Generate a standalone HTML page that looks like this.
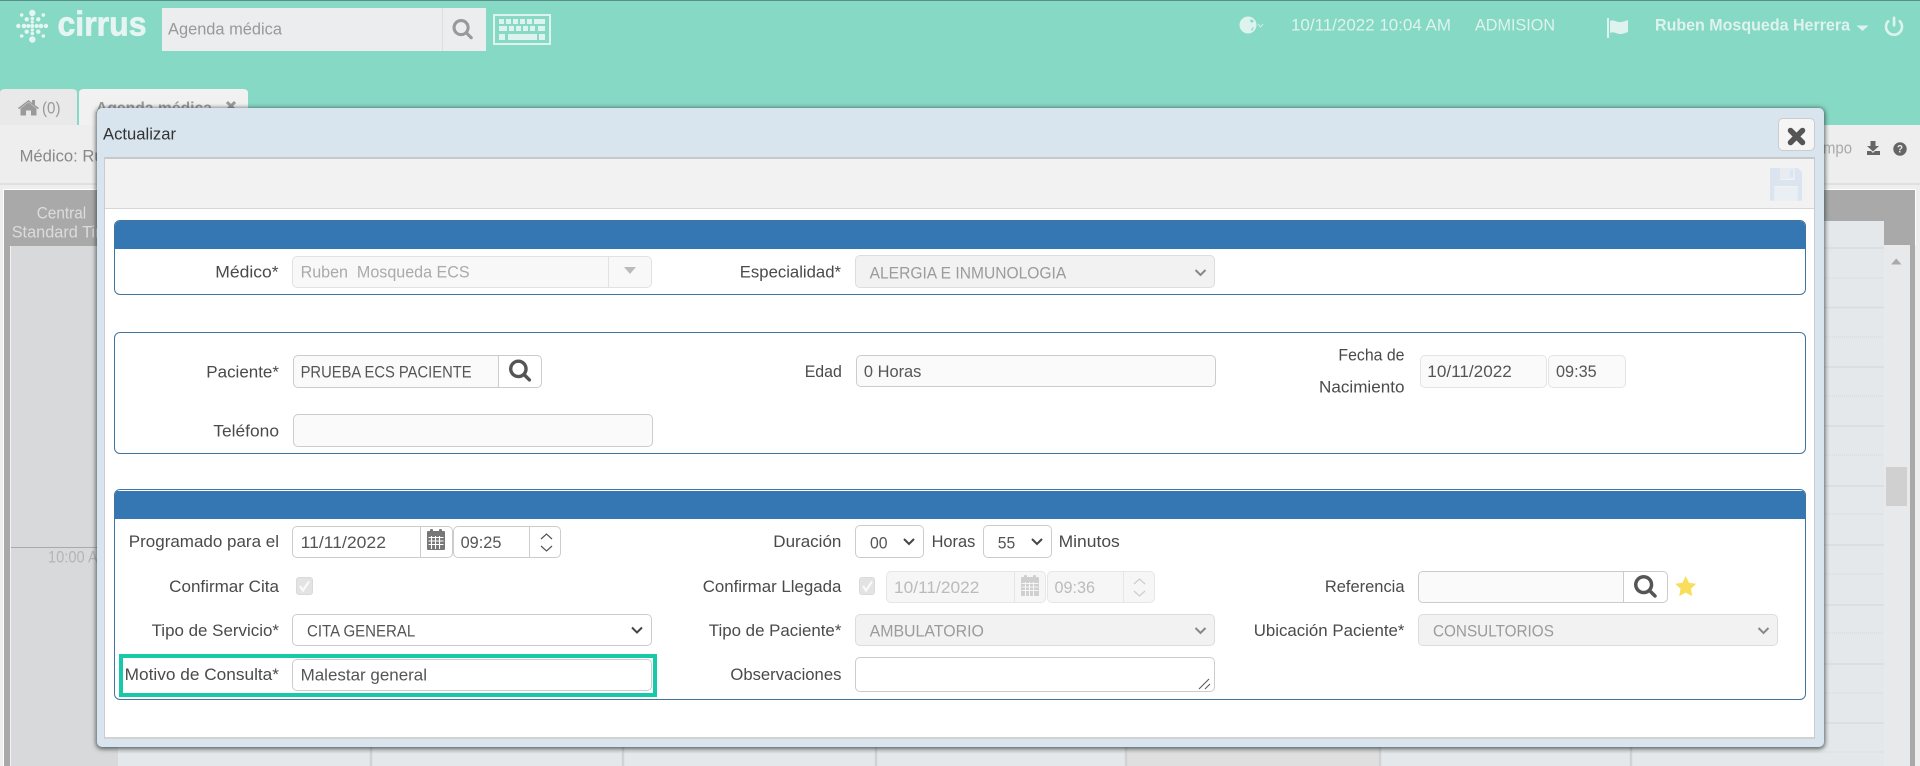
<!DOCTYPE html>
<html lang="es"><head><meta charset="utf-8"><title>Agenda médica</title>
<style>
html,body{margin:0;padding:0;width:1920px;height:766px;overflow:hidden;background:#e4e8ea;font-family:"Liberation Sans",sans-serif}
svg{position:absolute;left:0;top:0;display:block}
svg text{font-family:"Liberation Sans",sans-serif;font-size:17px;transform:translateY(-.5px)}
.a{position:absolute;box-sizing:border-box}
.f{position:absolute;box-sizing:border-box;border:1px solid #ccc;border-radius:5px;background:#fff}
.ro{background:#fafafa}
.dis{background:#f2f2f2;border-color:#ddd}
.lt{border-color:#e4e4e4}
.sec{position:absolute;box-sizing:border-box;left:114px;width:1692px;border:1px solid #41759f;border-radius:6px;background:#fff;overflow:hidden}
.hd{height:29px;background:#3477b2;margin:-1px -1px 0}
.l{fill:#4a4a4a}
.v{fill:#555}
.d{fill:#9b9b9b}
.w{fill:#dff3ee}
</style></head><body>

<svg width="1920" height="766" viewBox="0 0 1920 766">
<defs>
<path id="mag" d="M1152 704q0-185-131.500-316.500t-316.500-131.500-316.500 131.500-131.500 316.500 131.500 316.500 316.500 131.500 316.500-131.500 131.500-316.500zm512 832q0 52-38 90t-90 38q-54 0-90-38l-343-342q-179 124-399 124-143 0-273.500-55.500t-225-150-150-225-55.500-273.500 55.500-273.500 150-225 225-150 273.500-55.500 273.500 55.500 225 150 150 225 55.500 273.500q0 220-124 399l343 343q37 37 37 90z"/>
</defs>
<rect width="1920" height="125" fill="#86d9c5"/>
<rect width="1920" height="1" fill="#5c8f88"/>
<g fill="#e6f5f1">
<circle cx="18.300" cy="26" r="2.200"/><circle cx="24" cy="26" r="2.300"/><circle cx="28.300" cy="26" r="2"/><circle cx="32.300" cy="26" r="2"/><circle cx="36.700" cy="26" r="2"/><circle cx="41" cy="26" r="2.300"/><circle cx="46" cy="26" r="2.200"/>
<circle cx="32.300" cy="13" r="3.200"/><circle cx="32.300" cy="18.500" r="1.800"/><circle cx="32.300" cy="22" r="1.600"/><circle cx="32.300" cy="30" r="1.600"/><circle cx="32.300" cy="33.500" r="1.800"/><circle cx="32.300" cy="39.500" r="3.200"/>
<circle cx="21.700" cy="15" r="1.800"/><circle cx="26.700" cy="19.300" r="2.200"/><circle cx="38.300" cy="19.300" r="2.200"/><circle cx="43.300" cy="15" r="1.800"/><circle cx="21.700" cy="36" r="1.800"/><circle cx="26.700" cy="31.700" r="2.200"/><circle cx="38.300" cy="31.700" r="2.200"/><circle cx="43.300" cy="36" r="1.800"/>
</g>
<text x="57.500" y="36" textLength="89" lengthAdjust="spacingAndGlyphs" fill="#e6f5f1" stroke="#e6f5f1" stroke-width="0.700" style="font-size:34px;font-weight:bold">cirrus</text>
<rect x="162" y="8" width="324" height="43" fill="#ecedef"/>
<rect x="442" y="8" width="1" height="43" fill="#dcdddf"/>
<text x="168" y="35" textLength="114" lengthAdjust="spacingAndGlyphs" fill="#999">Agenda médica</text>
<use href="#mag" transform="translate(452.500,19) scale(0.0122)" fill="#999"/>
<g fill="none" stroke="#dff3ee" stroke-width="2"><rect x="494" y="15" width="56" height="29"/></g>
<g fill="#dff3ee">
<rect x="499" y="19" width="5" height="5"/><rect x="506" y="19" width="5" height="5"/><rect x="513" y="19" width="5" height="5"/><rect x="520" y="19" width="5" height="5"/><rect x="527" y="19" width="5" height="5"/><rect x="534" y="19" width="11" height="5"/>
<rect x="499" y="26" width="8" height="5"/><rect x="509" y="26" width="5" height="5"/><rect x="516" y="26" width="5" height="5"/><rect x="523" y="26" width="5" height="5"/><rect x="530" y="26" width="5" height="5"/><rect x="538" y="26" width="7" height="5"/>
<rect x="499" y="34" width="6" height="6"/><rect x="508" y="34" width="29" height="6"/><rect x="539" y="34" width="6" height="6"/>
</g>

<!-- globe -->
<circle cx="1248" cy="25" r="8.500" fill="#dff3ee"/>
<path d="M1251 19l3 2-2 2-2-2zM1252 28l2-1-2 4-1-1z" fill="#86d9c5"/>
<path d="M1258 24l2.500 3 2.500-3" fill="none" stroke="#cfeee6" stroke-width="1"/>
<text x="1291" y="31" textLength="160" lengthAdjust="spacingAndGlyphs" class="w">10/11/2022 10:04 AM</text>
<text x="1475" y="31" textLength="80" lengthAdjust="spacingAndGlyphs" class="w">ADMISION</text>
<!-- flag -->
<rect x="1607" y="18" width="2" height="20" fill="#dff3ee"/>
<path d="M1610 21c4-2 7 2 10 1c3 0 5-1 8-2v12c-3 1-5 2-8 2c-3 0-6-3-10-1z" fill="#dff3ee"/>
<text x="1655" y="31" textLength="195" lengthAdjust="spacingAndGlyphs" class="w" style="font-weight:bold">Ruben Mosqueda Herrera</text>
<path d="M1856.500 25.500h12l-6 5.500z" fill="#dff3ee"/>
<path d="M1889 20.500a8 8 0 1 0 10 0" fill="none" stroke="#dff3ee" stroke-width="2.600"/>
<rect x="1892.700" y="16.500" width="2.700" height="10" rx="1.300" fill="#dff3ee"/>

<!-- tabs -->
<path d="M0 125V93q0-4 5-4h67q5 0 5 4v32z" fill="#e9e9e9"/>
<path d="M79 125V93q0-4 5-4h159q5 0 5 4v32z" fill="#f1f1f1"/>
<path d="M18 108l10.500-8 3.500 2.700V100h3v5l4 3-1 1.200-9.500-7.500-9.500 7.500zM20.500 108.500l8-6.200 8 6.200v7h-5.500v-5h-5v5h-5.500z" fill="#9a9a9a"/>
<text x="42" y="114" textLength="18.500" lengthAdjust="spacingAndGlyphs" fill="#999">(0)</text>
<text x="96" y="114" textLength="116" lengthAdjust="spacingAndGlyphs" fill="#999" style="font-weight:bold">Agenda médica</text>
<path d="M227 102l8 8M235 102l-8 8" stroke="#999" stroke-width="3" fill="none"/>

<!-- toolbar strip -->
<rect y="125" width="1920" height="60" fill="#eeeeee"/>
<rect y="183" width="1920" height="2" fill="#e0e0e0"/>
<text x="19.600" y="162" textLength="84" lengthAdjust="spacingAndGlyphs" fill="#888">Médico: Ru</text>
<text x="1823" y="154" textLength="29" lengthAdjust="spacingAndGlyphs" fill="#aaa">mpo</text>
<path d="M1870.500 141h5v5h3.500l-6 5.500-6-5.500h3.500z" fill="#666"/>
<path d="M1867 151h4l2 2 2-2h5v4h-13z" fill="#666"/>
<circle cx="1900" cy="149" r="6.700" fill="#666"/>
<text x="1897" y="153" textLength="6" lengthAdjust="spacingAndGlyphs" fill="#eee" style="font-size:11px;font-weight:bold">?</text>

<!-- calendar bg -->
<rect x="0" y="185" width="1920" height="581" fill="#eeeeee"/>
<rect x="3" y="189" width="1913" height="577" fill="#fff"/>
<rect x="4" y="190" width="1911" height="576" fill="#a9a9a9"/>
<rect x="10" y="246" width="110" height="520" fill="#d8d9db"/>
<rect x="10" y="246" width="1" height="520" fill="#f2f2f2"/>
<rect x="11" y="547" width="100" height="1" fill="#aaa"/>
<text x="36.700" y="219" textLength="49.500" lengthAdjust="spacingAndGlyphs" fill="#dcdcdc">Central</text>
<text x="11.700" y="238" textLength="106" lengthAdjust="spacingAndGlyphs" fill="#dcdcdc">Standard Time</text>
<text x="48" y="563" textLength="62" lengthAdjust="spacingAndGlyphs" fill="#b5b5b5">10:00 AM</text>
<rect x="118" y="221" width="1766" height="24" fill="#e4e8ea"/>
<rect x="118" y="245" width="1766" height="521" fill="#e4e8ea"/>
<rect x="1126" y="245" width="254" height="521" fill="#dfdfdf"/>
<g stroke="#d9dcde" stroke-width="1.500">
<path d="M118 248H1884M118 307.500H1884M118 367H1884M118 426H1884M118 486H1884M118 545H1884M118 605H1884M118 664H1884M118 723H1884"/>
</g>
<g stroke="#d5d8da" stroke-width="1" stroke-dasharray="1 1">
<path d="M118 278H1884M118 337H1884M118 396H1884M118 455H1884M118 514H1884M118 574H1884M118 633H1884M118 693H1884M118 752H1884"/>
</g>
<g stroke="#cfd3d5" stroke-width="2.500">
<path d="M371 245V766M623 245V766M876 245V766M1126 245V766M1380 245V766M1631 245V766"/>
</g>
<rect x="1884" y="245" width="26" height="521" fill="#e8e9ea"/>
<rect x="1886" y="467" width="21" height="39" fill="#d0d0d0"/>
<path d="M1891 264.500h10.500l-5.250-6z" fill="#aaa"/>
<rect x="1915" y="245" width="5" height="521" fill="#eeeeee"/>
</svg>

<!-- modal -->
<div class="a" style="left:97px;top:108px;width:1727px;height:639px;background:#d9e5ee;border-radius:5px;box-shadow:0 1px 5px 1px rgba(40,50,50,.75)"></div>
<div class="a" style="left:104px;top:157px;width:1711px;height:582px;background:#fff;border:1px solid #ccc;border-top:2px solid #c8c8c8;border-bottom:2px solid #d2d2d2"></div>
<div class="a" style="left:105px;top:159px;width:1709px;height:50px;background:#f2f2f2;border-bottom:1px solid #d6d6d6"></div>
<div class="a" style="left:1778px;top:118px;width:37px;height:33px;background:#f5f5f5;border:1px solid #ccc;border-radius:5px"></div>

<div class="sec" style="top:220px;height:75px"><div class="hd"></div></div>
<div class="sec" style="top:332px;height:122px"></div>
<div class="sec" style="top:489px;height:211px"><div class="hd" style="height:28px;margin-top:1px"></div></div>

<!-- section 1 fields -->
<div class="f dis" style="left:292px;top:256px;width:360px;height:32px;background:#f8f8f8;border-color:#e2e2e2"></div>
<div class="a" style="left:608px;top:257px;width:1px;height:30px;background:#e2e2e2"></div>
<div class="f dis" style="left:855px;top:255px;width:360px;height:33px"></div>
<!-- section 2 fields -->
<div class="f ro" style="left:293px;top:355px;width:249px;height:33px"></div>
<div class="a" style="left:498px;top:356px;height:31px;background:#fff;border-left:1px solid #ccc;border-radius:0 5px 5px 0;width:43px"></div>
<div class="f ro" style="left:293px;top:414px;width:360px;height:33px"></div>
<div class="f ro" style="left:856px;top:355px;width:360px;height:32px"></div>
<div class="f ro lt" style="left:1420px;top:355px;width:127px;height:33px"></div>
<div class="f ro lt" style="left:1548px;top:355px;width:78px;height:33px"></div>
<!-- section 3 fields -->
<div class="f" style="left:292px;top:526px;width:161px;height:32px"></div>
<div class="a" style="left:420px;top:527px;width:1px;height:30px;background:#ccc"></div>
<div class="f" style="left:453px;top:526px;width:108px;height:32px"></div>
<div class="a" style="left:529px;top:527px;width:1px;height:30px;background:#ccc"></div>
<div class="f" style="left:292px;top:614px;width:360px;height:32px"></div>
<div class="a" style="left:119px;top:654px;width:538px;height:43px;border:4.500px solid #17c9a9;background:#fff"></div>
<div class="f" style="left:292px;top:659px;width:360px;height:32px"></div>
<div class="f" style="left:855px;top:525px;width:69px;height:33px"></div>
<div class="f" style="left:983px;top:525px;width:69px;height:33px"></div>
<div class="f dis" style="left:886px;top:571px;width:160px;height:32px;background:#f6f6f6;border-color:#e6e6e6"></div>
<div class="a" style="left:1014px;top:572px;width:1px;height:30px;background:#e6e6e6"></div>
<div class="f dis" style="left:1047px;top:571px;width:108px;height:32px;background:#f6f6f6;border-color:#e6e6e6"></div>
<div class="a" style="left:1123px;top:572px;width:1px;height:30px;background:#e6e6e6"></div>
<div class="f dis" style="left:855px;top:614px;width:360px;height:32px"></div>
<div class="f" style="left:855px;top:657px;width:360px;height:35px"></div>
<div class="f ro" style="left:1418px;top:571px;width:250px;height:32px"></div>
<div class="a" style="left:1623px;top:572px;width:44px;height:30px;background:#fff;border-left:1px solid #ccc;border-radius:0 5px 5px 0"></div>
<div class="f dis" style="left:1418px;top:614px;width:360px;height:32px"></div>
<div class="a" style="left:296px;top:577px;width:17px;height:18px;background:#e3e3e3;border:1px solid #dadada;border-radius:3px"></div>
<div class="a" style="left:859px;top:577px;width:16px;height:18px;background:#e3e3e3;border:1px solid #dadada;border-radius:3px"></div>

<svg width="1920" height="766" viewBox="0 0 1920 766">
<!-- modal chrome -->
<text x="103" y="140" textLength="73" lengthAdjust="spacingAndGlyphs" fill="#333">Actualizar</text>
<path d="M1790.500 130.500l12 12M1802.500 130.500l-12 12" stroke="#555" stroke-width="5.500" stroke-linecap="round" fill="none"/>
<path d="M1770 168h10v12h15v-12h3l4 4v28.700h-4.500v-14.700h-23v14.700h-4.500z" fill="#dae5ef"/>
<rect x="1775" y="187" width="22" height="13.700" fill="#eaeff4"/>
<rect x="1780" y="168" width="15" height="11" fill="#e6ecf2"/>
<rect x="1790" y="170" width="3" height="7" fill="#dae5ef"/>

<!-- section 1 -->
<text x="215.300" y="278" textLength="63.300" lengthAdjust="spacingAndGlyphs" class="l">Médico*</text>
<text x="300.600" y="278" textLength="169" lengthAdjust="spacingAndGlyphs" fill="#aaa" xml:space="preserve">Ruben  Mosqueda ECS</text>
<path d="M624 267h12l-6 7z" fill="#bbb"/>
<text x="739.800" y="278" textLength="101.200" lengthAdjust="spacingAndGlyphs" class="l">Especialidad*</text>
<text x="869.600" y="279" textLength="196.700" lengthAdjust="spacingAndGlyphs" class="d">ALERGIA E INMUNOLOGIA</text>
<path d="M1195.500 270l5 5 5-5" fill="none" stroke="#888" stroke-width="2"/>

<!-- section 2 -->
<text x="206.300" y="378" textLength="72.700" lengthAdjust="spacingAndGlyphs" class="l">Paciente*</text>
<text x="300.600" y="378" textLength="171" lengthAdjust="spacingAndGlyphs" class="v">PRUEBA ECS PACIENTE</text>
<use href="#mag" transform="translate(509,359.500) scale(0.0133)" fill="#555"/>
<text x="213.300" y="437" textLength="65.700" lengthAdjust="spacingAndGlyphs" class="l">Teléfono</text>
<text x="804.700" y="377.500" textLength="37.100" lengthAdjust="spacingAndGlyphs" class="l">Edad</text>
<text x="863.900" y="377.500" textLength="57.500" lengthAdjust="spacingAndGlyphs" class="v">0 Horas</text>
<text x="1338.400" y="361" textLength="66.100" lengthAdjust="spacingAndGlyphs" class="l">Fecha de</text>
<text x="1319" y="393" textLength="85.500" lengthAdjust="spacingAndGlyphs" class="l">Nacimiento</text>
<text x="1427.300" y="377.500" textLength="84.500" lengthAdjust="spacingAndGlyphs" class="v">10/11/2022</text>
<text x="1556" y="377.500" textLength="40.700" lengthAdjust="spacingAndGlyphs" class="v">09:35</text>

<!-- section 3 -->
<text x="128.800" y="547.700" textLength="150.200" lengthAdjust="spacingAndGlyphs" class="l">Programado para el</text>
<text x="300.600" y="548.300" textLength="85.400" lengthAdjust="spacingAndGlyphs" class="v">11/11/2022</text>
<g fill="#777">
<path d="M428 531h16a1 1 0 0 1 1 1v17a1 1 0 0 1-1 1h-16a1 1 0 0 1-1-1v-17a1 1 0 0 1 1-1z"/>
<rect x="430" y="529" width="3" height="5" rx="1"/><rect x="439" y="529" width="3" height="5" rx="1"/>
</g>
<path d="M428.500 537.500h15M428.500 541h15M428.500 544.500h15M431.500 536v13M435.500 536v13M439.500 536v13" stroke="#fff" stroke-width="1.100" fill="none"/>
<text x="460.600" y="548.300" textLength="40.800" lengthAdjust="spacingAndGlyphs" class="v">09:25</text>
<path d="M541 539l5.500-5 5.500 5M541 546l5.500 5 5.500-5" fill="none" stroke="#555" stroke-width="1.200"/>

<text x="169.200" y="592.300" textLength="109.800" lengthAdjust="spacingAndGlyphs" class="l">Confirmar Cita</text>
<path d="M300 586l3 4.500 6-9" fill="none" stroke="#fafafa" stroke-width="2.200"/>
<text x="151.600" y="636.700" textLength="127.400" lengthAdjust="spacingAndGlyphs" class="l">Tipo de Servicio*</text>
<text x="307" y="637" textLength="108.300" lengthAdjust="spacingAndGlyphs" class="v">CITA GENERAL</text>
<path d="M632 627.500l5 5 5-5" fill="none" stroke="#444" stroke-width="2"/>
<text x="124.700" y="680.300" textLength="154.300" lengthAdjust="spacingAndGlyphs" class="l">Motivo de Consulta*</text>
<text x="300.600" y="681" textLength="126.400" lengthAdjust="spacingAndGlyphs" class="v">Malestar general</text>

<text x="773.300" y="547.700" textLength="68.100" lengthAdjust="spacingAndGlyphs" class="l">Duración</text>
<text x="870" y="549" textLength="17.600" lengthAdjust="spacingAndGlyphs" class="v">00</text>
<path d="M904 539l5 5 5-5" fill="none" stroke="#444" stroke-width="2"/>
<text x="931.600" y="547.700" textLength="43.700" lengthAdjust="spacingAndGlyphs" class="l">Horas</text>
<text x="997.800" y="549" textLength="17.500" lengthAdjust="spacingAndGlyphs" class="v">55</text>
<path d="M1032 539l5 5 5-5" fill="none" stroke="#444" stroke-width="2"/>
<text x="1058.600" y="547.700" textLength="61.200" lengthAdjust="spacingAndGlyphs" class="l">Minutos</text>

<text x="702.700" y="592.300" textLength="138.700" lengthAdjust="spacingAndGlyphs" class="l">Confirmar Llegada</text>
<path d="M863 586l3 4.500 6-9" fill="none" stroke="#fafafa" stroke-width="2.200"/>
<text x="894" y="593.300" textLength="85.400" lengthAdjust="spacingAndGlyphs" fill="#bbb">10/11/2022</text>
<g fill="#cfcfcf">
<path d="M1022 577h16a1 1 0 0 1 1 1v17a1 1 0 0 1-1 1h-16a1 1 0 0 1-1-1v-17a1 1 0 0 1 1-1z"/>
<rect x="1024" y="575" width="3" height="5" rx="1"/><rect x="1033" y="575" width="3" height="5" rx="1"/>
</g>
<path d="M1021.500 583.500h17M1021.500 587h17M1021.500 590.500h17M1025.500 582v14M1029.500 582v14M1033.500 582v14" stroke="#f6f6f6" stroke-width="1.100" fill="none"/>
<text x="1054.500" y="593.300" textLength="40.500" lengthAdjust="spacingAndGlyphs" fill="#bbb">09:36</text>
<path d="M1134 584l5.500-5 5.500 5M1134 591l5.500 5 5.500-5" fill="none" stroke="#ccc" stroke-width="1.200"/>

<text x="708.800" y="636.700" textLength="132.600" lengthAdjust="spacingAndGlyphs" class="l">Tipo de Paciente*</text>
<text x="869.600" y="637" textLength="114.300" lengthAdjust="spacingAndGlyphs" class="d">AMBULATORIO</text>
<path d="M1195.500 628l5 5 5-5" fill="none" stroke="#888" stroke-width="2"/>
<text x="730.400" y="680.300" textLength="111" lengthAdjust="spacingAndGlyphs" class="l">Observaciones</text>
<path d="M1199 689l10-10M1205 689l5-5" stroke="#555" stroke-width="1" fill="none"/>

<text x="1324.900" y="592.300" textLength="79.600" lengthAdjust="spacingAndGlyphs" class="l">Referencia</text>
<use href="#mag" transform="translate(1634,575) scale(0.0137)" fill="#555"/>
<path d="M1685.700 576l3.200 6.700 7.300 1-5.300 5.100 1.300 7.300-6.500-3.500-6.500 3.500 1.300-7.300-5.300-5.100 7.300-1z" fill="#f9de5c"/>
<text x="1253.700" y="636.700" textLength="150.800" lengthAdjust="spacingAndGlyphs" class="l">Ubicación Paciente*</text>
<text x="1433" y="637" textLength="120.900" lengthAdjust="spacingAndGlyphs" class="d">CONSULTORIOS</text>
<path d="M1758.500 628l5 5 5-5" fill="none" stroke="#888" stroke-width="2"/>
</svg>
</body></html>
